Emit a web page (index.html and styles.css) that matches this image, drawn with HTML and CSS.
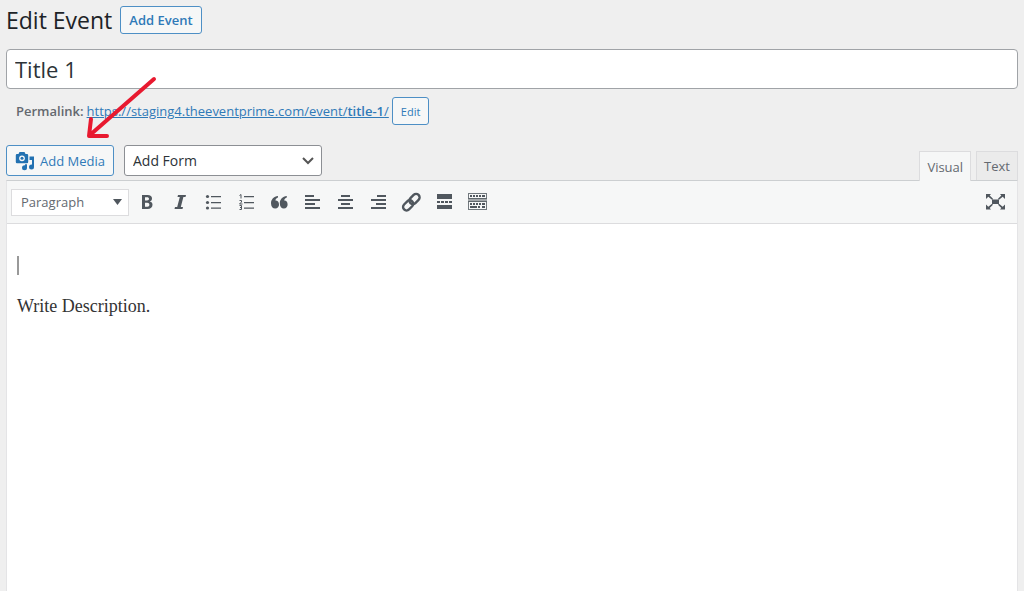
FILE: index.html
```html
<!DOCTYPE html>
<html lang="en">
  <head>
    <meta charset="UTF-8" />
    <meta name="viewport" content="width=device-width, initial-scale=1.0" />
    <title>Edit Event</title>
    <link rel="stylesheet" href="styles.css">
  </head>

  <body>
    <main class="wrap">
      <header class="page-header">
        <h1>Edit Event</h1>
        <button type="button" class="button add-event">Add Event</button>
      </header>

      <input type="text" id="title" class="title-input" value="Title 1" aria-label="Title" />

      <div class="permalink">
        <strong>Permalink:</strong>
        <a href="#">https://staging4.theeventprime.com/event/<b>title-1</b>/</a>
        <button type="button" class="button edit-slug">Edit</button>
      </div>

      <div class="editor-tools">
        <div class="media-buttons">
          <button type="button" class="button add-media">
            <svg width="20" height="20" viewBox="0 0 20 20" aria-hidden="true">
              <path fill="currentColor" fill-rule="evenodd" d="M2 3h1.500L4.500 1h5l1 2H12a1.200 1.200 0 0 1 1.200 1.200V11a1.200 1.200 0 0 1-1.200 1.200H2A1.200 1.200 0 0 1 .8 11V4.200A1.200 1.200 0 0 1 2 3zM7 4.400a2.900 2.900 0 1 0 0 5.800A2.900 2.900 0 0 0 7 4.400z" />
              <circle cx="7" cy="7.300" r="1.500" fill="currentColor" />
              <path fill="currentColor" d="M14.500 5.500H19V16h-2V9h-2.500zM10 13.200h2V17h-2z" />
              <circle cx="9.500" cy="16.700" r="2.500" fill="currentColor" />
              <circle cx="16.500" cy="16" r="2.500" fill="currentColor" />
            </svg>
            Add Media
          </button>
          <select class="form-select" aria-label="Add Form">
            <option>Add Form</option>
          </select>
        </div>
        <div class="editor-tabs">
          <button type="button" class="tab active">Visual</button>
          <button type="button" class="tab">Text</button>
        </div>
      </div>

      <section class="editor">
        <div class="toolbar">
          <select class="format-select" aria-label="Format">
            <option>Paragraph</option>
          </select>
          <button type="button" class="tool" aria-label="Bold">
            <svg viewBox="0 0 20 20"><path fill-rule="evenodd" d="M5 3h5.500c3 0 4.500 1.300 4.500 3.500 0 1.500-.8 2.600-2.200 3 1.700.4 2.700 1.500 2.700 3.300 0 2.600-1.800 4.200-5 4.200H5zM8 5.200v3.300h2c1.300 0 2-.5 2-1.700 0-1-.7-1.600-2-1.600zM8 10.700v4h2.300c1.400 0 2.100-.7 2.100-2s-.8-2-2.200-2z" /></svg>
          </button>
          <button type="button" class="tool" aria-label="Italic">
            <svg viewBox="0 0 20 20"><path d="M8 3h8l-.5 2h-2.100l-2.600 10h2.200l-.5 2h-8l.5-2h2.200L9.800 5H7.500z" /></svg>
          </button>
          <button type="button" class="tool" aria-label="Bulleted list">
            <svg viewBox="0 0 20 20"><circle cx="4.500" cy="4.500" r="1.600" /><circle cx="4.500" cy="10.500" r="1.600" /><circle cx="4.500" cy="16" r="1.600" /><path d="M8 4h10v1.300H8zM8 10h10v1.300H8zM8 15.500h10v1.300H8z" /></svg>
          </button>
          <button type="button" class="tool" aria-label="Numbered list">
            <svg viewBox="0 0 20 20"><path d="M8 4h10v1.300H8zM8 10h10v1.300H8zM8 15.500h10v1.300H8z" /><path class="line" d="M3.500 3.500 5 2.500V6.500M3.500 8.500H5.500v1.500l-2 2H6.500M3.500 13.500h2v4h-2M4 15.500h1.500" /></svg>
          </button>
          <button type="button" class="tool" aria-label="Blockquote">
            <svg viewBox="0 0 20 20"><path d="M9 4v1.500C7.500 6 6.500 7.200 6.400 8.600 8.300 8.400 10 10 10 12.200A3.800 3.800 0 0 1 6.200 16.500C3.800 16.500 2 14.500 2 11.200 2 7.500 4.800 4.400 9 4zM17.800 4v1.500c-1.500.5-2.500 1.700-2.600 3.100 1.900-.2 3.400 1.400 3.400 3.600a3.900 3.900 0 0 1-3.700 4.300c-2.400 0-4.100-2-4.100-5.300 0-3.700 2.800-6.800 7-7.200z" /></svg>
          </button>
          <button type="button" class="tool" aria-label="Align left">
            <svg viewBox="0 0 20 20"><path d="M3 3h9v2H3zM3 7h15v2H3zM3 11h10v2H3zM3 15h15v2H3z" /></svg>
          </button>
          <button type="button" class="tool" aria-label="Align center">
            <svg viewBox="0 0 20 20"><path d="M6 3h9v2H6zM3 7h15v2H3zM6 11h9v2H6zM3 15h15v2H3z" /></svg>
          </button>
          <button type="button" class="tool" aria-label="Align right">
            <svg viewBox="0 0 20 20"><path d="M9 3h9v2H9zM3 7h15v2H3zM8 11h10v2H8zM3 15h15v2H3z" /></svg>
          </button>
          <button type="button" class="tool" aria-label="Insert link">
            <svg viewBox="0 0 20 20"><g fill="none" stroke="currentColor" stroke-width="2.400" transform="rotate(-45 10.500 10)"><rect x="0" y="6.500" width="11.500" height="7" rx="3.500" /><rect x="9" y="6.500" width="11.500" height="7" rx="3.500" /></g></svg>
          </button>
          <button type="button" class="tool" aria-label="Read more">
            <svg viewBox="0 0 20 20"><path d="M3 2h15v5H3zM3 9h3v2H3zM7 9h3v2H7zM11 9h3v2h-3zM15 9h3v2h-3zM3 13h15v4H3z" /></svg>
          </button>
          <button type="button" class="tool" aria-label="Toolbar toggle">
            <svg viewBox="0 0 20 20"><path fill-rule="evenodd" opacity=".8" d="M1 1h19v6H1zM2 2v4h17V2zM1 9h19v9H1zM2 10v7h17v-7z" /><path opacity=".5" d="M1 6h19v4H1z" /><path d="M3 3h2v2H3zM6 3h2v2H6zM9 3h2v2H9zM12 3h2v2h-2zM15 3h3v2h-3zM3 11h2v2H3zM6 11h2v2H6zM9 11h2v2H9zM12 11h2v2h-2zM15 11h3v2h-3zM3 14h7v2H3zM11 14h2v2h-2zM15 14h3v2h-3z" /></svg>
          </button>
          <button type="button" class="tool fullscreen" aria-label="Distraction-free writing">
            <svg viewBox="0 0 20 20"><path d="M7 7.500h7v4.500H7zM1 2h5L4.700 3.400 8 6.800 7 7.800 3.300 4.700 1 7zM20 2h-5l1.300 1.400L13 6.800l1 1 3.700-3.100L20 7zM1 17.500h5l-1.300-1.400L8 12.700l-1-1-3.700 3.100L1 12.500zM20 17.500h-5l1.300-1.400-3.300-3.400 1-1 3.700 3.100 2.300-2.300z" /></svg>
          </button>
        </div>
        <div class="editor-content" contenteditable="true" role="textbox" aria-label="Description">
          <p><span class="caret"></span></p>
          <p>Write Description.</p>
        </div>
      </section>
    </main>

    <!-- pointer to the Add Media button -->
    <svg class="pointer" width="76" height="66" viewBox="0 0 76 66" aria-hidden="true">
      <path d="M71 5 7 61M8 45 6 62 24 62" fill="none" stroke="#e8192f" stroke-width="4" stroke-linecap="round" stroke-linejoin="round" />
    </svg>
  </body>
</html>
```
FILE: styles.css
```css
* {
  box-sizing: border-box;
}

body {
  margin: 0;
  background: #efefef;
  color: #3c434a;
  font-family: "Open Sans", "Noto Sans", sans-serif;
  font-size: 13px;
}

button,
input,
select {
  font-family: inherit;
  margin: 0;
}

.wrap {
  display: flex;
  flex-direction: column;
  min-height: 100vh;
  padding: 6px 6px 0;
}

.page-header {
  display: flex;
  align-items: center;
  gap: 8px;
  height: 28px;
}

.page-header h1 {
  margin: 0;
  font-size: 23px;
  line-height: 28px;
  font-weight: 400;
  color: #1d2327;
}

.button {
  border: 1px solid #4d8fc5;
  border-radius: 3px;
  background: #f6f7f7;
  color: #2f7ab8;
  font-size: 13px;
  cursor: pointer;
}

.add-event {
  height: 28px;
  padding: 0 8px;
  font-weight: 600;
}

.title-input {
  width: 100%;
  height: 40px;
  margin-top: 15px;
  padding: 0 8px;
  border: 1px solid #a0a3a7;
  border-radius: 4px;
  background: #fff;
  color: #2c3338;
  font-size: 22px;
}

.permalink {
  display: flex;
  align-items: center;
  gap: 3px;
  margin-top: 8px;
  padding-left: 10px;
  color: #646970;
}

.permalink strong {
  font-weight: 600;
}

.permalink a {
  color: #2f7ab8;
}

.permalink b {
  font-weight: 600;
}

.edit-slug {
  height: 28px;
  padding: 0 8px;
  font-size: 11px;
}

.editor-tools {
  display: flex;
  justify-content: space-between;
  margin-top: 20px;
}

.media-buttons {
  display: flex;
  gap: 10px;
  padding-bottom: 4px;
}

.add-media {
  display: flex;
  align-items: center;
  gap: 5px;
  height: 31px;
  padding: 0 8px;
}

.add-media svg {
  color: #2271b1;
}

.form-select {
  width: 198px;
  height: 31px;
  padding: 0 24px 0 8px;
  border: 1px solid #8c8f94;
  border-radius: 3px;
  appearance: none;
  background: #fff url("data:image/svg+xml,%3Csvg xmlns='http://www.w3.org/2000/svg' width='12' height='8'%3E%3Cpath d='M1 1l5 5 5-5' fill='none' stroke='%23555' stroke-width='2'/%3E%3C/svg%3E") no-repeat right 7px center;
  color: #2c3338;
  font-size: 14px;
}

.editor-tabs {
  display: flex;
  align-items: flex-end;
  gap: 5px;
}

.tab {
  height: 29px;
  padding: 0 7px;
  border: 1px solid #dcdcde;
  border-bottom: 0;
  background: #ebebeb;
  color: #646970;
  font-size: 13px;
}

.tab.active {
  height: 30px;
  margin-bottom: -1px;
  background: #f6f7f7;
  z-index: 1;
}

.editor {
  display: flex;
  flex: 1;
  flex-direction: column;
  border: 1px solid #e4e4e6;
  border-top-color: #cccfd1;
  border-bottom: 0;
}

.toolbar {
  display: flex;
  align-items: center;
  height: 43px;
  padding: 0 6px 0 4px;
  border-bottom: 1px solid #dcdcde;
  background: #f6f7f7;
}

.format-select {
  width: 118px;
  height: 27px;
  margin-right: 1px;
  padding: 0 20px 0 9px;
  border: 1px solid #dcdcde;
  border-radius: 0;
  appearance: none;
  background: #fff url("data:image/svg+xml,%3Csvg xmlns='http://www.w3.org/2000/svg' width='9' height='6'%3E%3Cpath d='M0 0h9L4.500 6z' fill='%2350575e'/%3E%3C/svg%3E") no-repeat right 6px center;
  color: #646970;
  font-size: 13px;
}

.tool {
  display: flex;
  align-items: center;
  justify-content: center;
  width: 33px;
  height: 30px;
  padding: 0;
  border: 0;
  background: none;
  color: #50575e;
}

.tool svg {
  width: 20px;
  height: 20px;
  fill: currentColor;
}

.tool .line {
  fill: none;
  stroke: currentColor;
}

.fullscreen {
  margin-left: auto;
}

.editor-content {
  flex: 1;
  padding: 26px 10px;
  background: #fff;
  color: #333;
  font-family: Georgia, "Liberation Serif", serif;
  font-size: 18px;
  line-height: 28px;
  outline: none;
}

.editor-content p {
  min-height: 28px;
  margin: 0 0 14px;
}

.caret {
  display: inline-block;
  width: 2px;
  height: 19px;
  background: #999;
  vertical-align: middle;
}

.pointer {
  position: absolute;
  top: 74px;
  left: 83px;
  pointer-events: none;
}
```
